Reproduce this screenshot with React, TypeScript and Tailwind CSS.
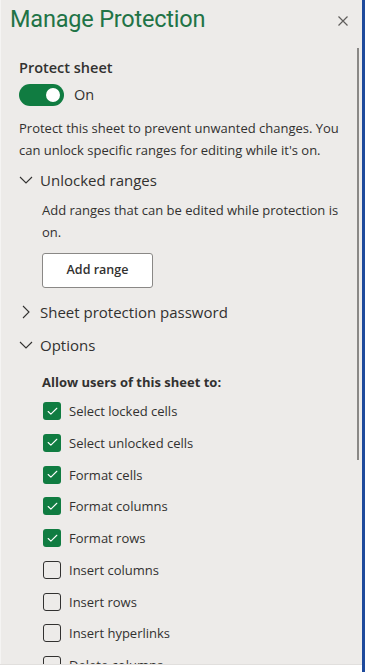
import { Check } from "lucide-react"

const options = [
  { label: "Select locked cells", checked: true },
  { label: "Select unlocked cells", checked: true },
  { label: "Format cells", checked: true },
  { label: "Format columns", checked: true },
  { label: "Format rows", checked: true },
  { label: "Insert columns", checked: false },
  { label: "Insert rows", checked: false },
  { label: "Insert hyperlinks", checked: false },
  { label: "Delete columns", checked: false },
]

function Box({ checked }: { checked: boolean }) {
  if (checked)
    return (
      <div className="flex h-[18px] w-[18px] shrink-0 items-center justify-center rounded-[3px] bg-[#107c41]">
        <Check className="h-[13px] w-[13px] text-white" strokeWidth={2} />
      </div>
    )
  return <div className="h-[18px] w-[18px] shrink-0 rounded-[3px] border border-[#323130]" />
}

const ChevDown = () => (
  <svg width="14" height="8" viewBox="0 0 14 8" className="shrink-0">
    <path d="M1 1 L7 7 L13 1" fill="none" stroke="#323130" strokeWidth="1.1" />
  </svg>
)

const ChevRight = () => (
  <svg width="14" height="14" viewBox="0 0 14 14" className="shrink-0">
    <path d="M4 1 L10 7 L4 13" fill="none" stroke="#323130" strokeWidth="1.1" />
  </svg>
)

export default function App() {
  return (
    <div className="flex h-[672px] w-[365px] font-['Open_Sans',sans-serif] text-[#323130]">
      <div className="flex w-[362px] flex-col">
        <div className="relative h-[664px] overflow-hidden border-l border-[#f5f4f3] bg-[#edebe9]">
          {/* scrollbar */}
          <div className="absolute left-[356px] top-[48px] h-[412px] w-[2px] bg-[#8a8886]" />

          <div className="flex items-start justify-between pl-[9px] pr-[14px] pt-[3px]">
            <h1 className="font-['Roboto',sans-serif] text-[23.5px] leading-[32px] tracking-[-0.2px] text-[#217346]">
              Manage Protection
            </h1>
            <svg width="10" height="10" viewBox="0 0 10 10" className="mt-[13px]">
              <path d="M0.5 0.5 L9.5 9.5 M9.5 0.5 L0.5 9.5" stroke="#605e5c" strokeWidth="1.2" />
            </svg>
          </div>

          <div className="pl-[18px] pr-[14px]">
            <div className="mt-[23px] text-[14.5px] font-semibold leading-[20px]">Protect sheet</div>
            <div className="mt-[6px] flex items-center gap-[10px]">
              <div className="flex h-[22px] w-[45px] items-center justify-end rounded-full bg-[#107c41] pr-[4px]">
                <div className="h-[14px] w-[14px] rounded-full bg-white" />
              </div>
              <span className="text-[14.5px]">On</span>
            </div>

            <p className="mt-[11px] text-[13px] leading-[22px]">
              Protect this sheet to prevent unwanted changes. You can unlock specific ranges for editing while it's on.
            </p>

            <div className="mt-[8px] flex items-center gap-[7px]">
              <ChevDown />
              <span className="text-[15px] leading-[22px]">Unlocked ranges</span>
            </div>

            <p className="mt-[8px] pl-[23px] text-[13px] leading-[22px]">
              Add ranges that can be edited while protection is on.
            </p>

            <div className="mt-[10px] pl-[23px]">
              <button className="h-[35px] w-[111px] rounded-[3px] border border-[#8a8886] bg-white text-[12.5px] font-semibold">
                Add range
              </button>
            </div>

            <div className="mt-[13px] flex items-center gap-[7px]">
              <ChevRight />
              <span className="text-[15px] leading-[22px]">Sheet protection password</span>
            </div>

            <div className="mt-[11px] flex items-center gap-[7px]">
              <ChevDown />
              <span className="text-[15px] leading-[22px]">Options</span>
            </div>

            <div className="mt-[16px] pl-[23px] text-[13px] font-bold leading-[20px]">
              Allow users of this sheet to:
            </div>

            <div className="mt-[10px] flex flex-col gap-[13.75px] pl-[24px]">
              {options.map((o) => (
                <div key={o.label} className="flex h-[18px] items-center gap-[8px]">
                  <Box checked={o.checked} />
                  <span className="text-[13px] leading-[18px]">{o.label}</span>
                </div>
              ))}
            </div>
          </div>
        </div>
        <div className="h-[8px] border-t border-[#e1dfdd] bg-white" />
      </div>
      <div className="w-[3px] bg-[#1e4a9c]" />
    </div>
  )
}
